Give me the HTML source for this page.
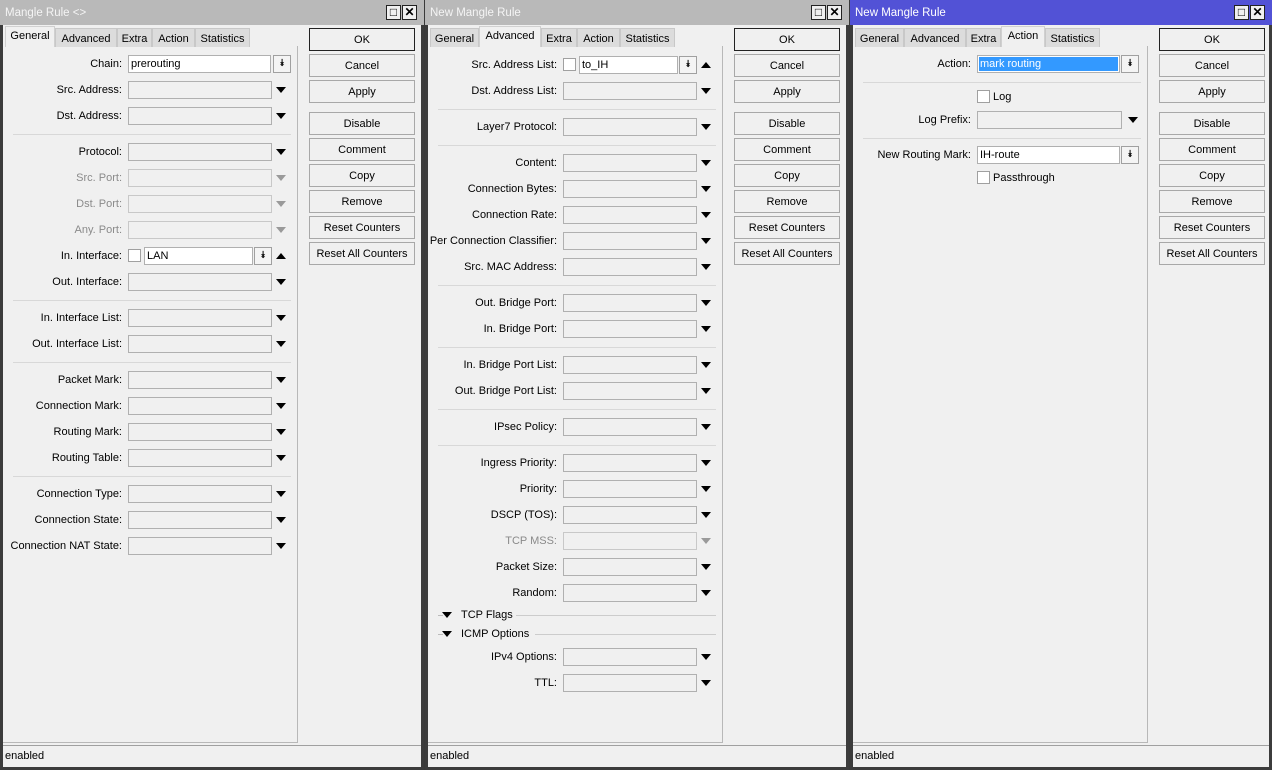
<!DOCTYPE html>
<html><head><meta charset="utf-8"><style>
*{box-sizing:border-box;margin:0;padding:0}
body{width:1272px;height:770px;background:#3a3a3a;font-family:"Liberation Sans",Arial,sans-serif;font-size:11px;color:#000;position:relative;overflow:hidden}
.w{position:absolute;top:0;height:770px;background:#f0f0f0;box-shadow:inset 3px 0 0 #3c3c3c,inset -3px 0 0 #3c3c3c,inset 0 -3px 0 #3c3c3c}
.t{position:absolute;left:0;right:0;top:0;height:25px;background:#b9b9b9;color:#f4f4f4;font-size:11.5px;padding:7px 0 0 5px}
.act .t{background:#5252d6;color:#fff}
.tb{position:absolute;top:5px;width:15px;height:15px;border:1px solid #222;background:#f0f0f0;font-size:12px;line-height:13px;text-align:center;font-weight:bold;color:#000}
.tabs{position:absolute;top:26px;left:2px;height:21px}
.tab{position:absolute;top:2px;height:19px;background:#dcdcdc;border:1px solid #c8c8c8;border-bottom:0;padding:4px 0 0 0;text-align:center;font-size:11px}
.tab.on{top:0;height:21px;background:#f0f0f0;border-color:#d0d0d0;padding-top:3px}
.pn{position:absolute;left:3px;top:46px;width:295px;height:697px;border:1px solid #b8b8b8;border-left:0;border-top:0}
.st{position:absolute;left:3px;right:3px;top:745px;height:22px;border-top:1px solid #a0a0a0;background:#f0f0f0;padding:4px 0 0 2px;font-size:11px}
.bt{position:absolute;left:309px;width:106px;height:23px;border:1px solid #a8a8a8;background:#f0f0f0;text-align:center;padding-top:5px;font-size:11px}
.bt.ok{border:1px solid #222}
.r{position:absolute;left:0;height:18px;width:300px}
.l{position:absolute;right:0;top:3px;text-align:right;white-space:nowrap;font-size:11px}
.f{position:absolute;top:0;height:18px;border:1px solid #b0b0b0;background:#f0f0f0;padding:2px 0 0 2px;font-size:11px}
.f.wh{background:#fff}
.a{position:absolute;top:6px;width:0;height:0;border-left:5px solid transparent;border-right:5px solid transparent;border-top:6px solid #000}
.a.up{border-top:0;border-bottom:6px solid #000}
.g .l{color:#8a8a8a}.g .a{border-top-color:#9a9a9a}.g .f{border-color:#c8c8c8}
.dd{position:absolute;top:0;width:18px;height:18px;border:1px solid #a0a0a0;background:#f4f4f4;font-size:10px;text-align:center;line-height:15px}
.cb{position:absolute;top:2px;width:13px;height:13px;border:1px solid #a0a0a0;background:#fff}
.sp{position:absolute;height:1px;background:#d8d8d8}
</style></head><body>

<!-- Window 1 -->
<div class="w" style="left:0;width:424px">
<div class="t">Mangle Rule &lt;&gt;</div>
<div class="tb" style="left:386px">□</div><div class="tb" style="left:402px">✕</div>
<div class="tabs" style="left:5px">
<div class="tab on" style="left:0;width:50px">General</div>
<div class="tab" style="left:50px;width:62px">Advanced</div>
<div class="tab" style="left:112px;width:35px">Extra</div>
<div class="tab" style="left:147px;width:43px">Action</div>
<div class="tab" style="left:190px;width:55px">Statistics</div>
</div>
<div class="pn"></div>
<div class="bt ok" style="top:28px">OK</div>
<div class="bt" style="top:54px">Cancel</div>
<div class="bt" style="top:80px">Apply</div>
<div class="bt" style="top:112px">Disable</div>
<div class="bt" style="top:138px">Comment</div>
<div class="bt" style="top:164px">Copy</div>
<div class="bt" style="top:190px">Remove</div>
<div class="bt" style="top:216px">Reset Counters</div>
<div class="bt" style="top:242px">Reset All Counters</div>

<div class="r" style="top:55px"><span class="l" style="right:178px">Chain:</span><span class="f wh" style="left:128px;width:143px">prerouting</span><span class="dd" style="left:273px">⯯</span></div>
<div class="r" style="top:81px"><span class="l" style="right:178px">Src. Address:</span><span class="f" style="left:128px;width:144px"></span><span class="a" style="left:276px"></span></div>
<div class="r" style="top:107px"><span class="l" style="right:178px">Dst. Address:</span><span class="f" style="left:128px;width:144px"></span><span class="a" style="left:276px"></span></div>
<div class="sp" style="left:13px;width:278px;top:134px"></div>
<div class="r" style="top:143px"><span class="l" style="right:178px">Protocol:</span><span class="f" style="left:128px;width:144px"></span><span class="a" style="left:276px"></span></div>
<div class="r g" style="top:169px"><span class="l" style="right:178px">Src. Port:</span><span class="f" style="left:128px;width:144px"></span><span class="a" style="left:276px"></span></div>
<div class="r g" style="top:195px"><span class="l" style="right:178px">Dst. Port:</span><span class="f" style="left:128px;width:144px"></span><span class="a" style="left:276px"></span></div>
<div class="r g" style="top:221px"><span class="l" style="right:178px">Any. Port:</span><span class="f" style="left:128px;width:144px"></span><span class="a" style="left:276px"></span></div>
<div class="r" style="top:247px"><span class="l" style="right:178px">In. Interface:</span><span class="cb" style="left:128px"></span><span class="f wh" style="left:144px;width:109px">LAN</span><span class="dd" style="left:254px">⯯</span><span class="a up" style="left:276px"></span></div>
<div class="r" style="top:273px"><span class="l" style="right:178px">Out. Interface:</span><span class="f" style="left:128px;width:144px"></span><span class="a" style="left:276px"></span></div>
<div class="sp" style="left:13px;width:278px;top:300px"></div>
<div class="r" style="top:309px"><span class="l" style="right:178px">In. Interface List:</span><span class="f" style="left:128px;width:144px"></span><span class="a" style="left:276px"></span></div>
<div class="r" style="top:335px"><span class="l" style="right:178px">Out. Interface List:</span><span class="f" style="left:128px;width:144px"></span><span class="a" style="left:276px"></span></div>
<div class="sp" style="left:13px;width:278px;top:362px"></div>
<div class="r" style="top:371px"><span class="l" style="right:178px">Packet Mark:</span><span class="f" style="left:128px;width:144px"></span><span class="a" style="left:276px"></span></div>
<div class="r" style="top:397px"><span class="l" style="right:178px">Connection Mark:</span><span class="f" style="left:128px;width:144px"></span><span class="a" style="left:276px"></span></div>
<div class="r" style="top:423px"><span class="l" style="right:178px">Routing Mark:</span><span class="f" style="left:128px;width:144px"></span><span class="a" style="left:276px"></span></div>
<div class="r" style="top:449px"><span class="l" style="right:178px">Routing Table:</span><span class="f" style="left:128px;width:144px"></span><span class="a" style="left:276px"></span></div>
<div class="sp" style="left:13px;width:278px;top:476px"></div>
<div class="r" style="top:485px"><span class="l" style="right:178px">Connection Type:</span><span class="f" style="left:128px;width:144px"></span><span class="a" style="left:276px"></span></div>
<div class="r" style="top:511px"><span class="l" style="right:178px">Connection State:</span><span class="f" style="left:128px;width:144px"></span><span class="a" style="left:276px"></span></div>
<div class="r" style="top:537px"><span class="l" style="right:178px">Connection NAT State:</span><span class="f" style="left:128px;width:144px"></span><span class="a" style="left:276px"></span></div>
<div class="st">enabled</div>
</div>

<!-- Window 2 -->
<div class="w" style="left:425px;width:424px">
<div class="t">New Mangle Rule</div>
<div class="tb" style="left:386px">□</div><div class="tb" style="left:402px">✕</div>
<div class="tabs" style="left:5px">
<div class="tab" style="left:0;width:49px">General</div>
<div class="tab on" style="left:49px;width:62px">Advanced</div>
<div class="tab" style="left:111px;width:36px">Extra</div>
<div class="tab" style="left:147px;width:43px">Action</div>
<div class="tab" style="left:190px;width:55px">Statistics</div>
</div>
<div class="pn"></div>
<div class="bt ok" style="top:28px">OK</div>
<div class="bt" style="top:54px">Cancel</div>
<div class="bt" style="top:80px">Apply</div>
<div class="bt" style="top:112px">Disable</div>
<div class="bt" style="top:138px">Comment</div>
<div class="bt" style="top:164px">Copy</div>
<div class="bt" style="top:190px">Remove</div>
<div class="bt" style="top:216px">Reset Counters</div>
<div class="bt" style="top:242px">Reset All Counters</div>

<div class="r" style="top:56px"><span class="l" style="right:168px">Src. Address List:</span><span class="cb" style="left:138px"></span><span class="f wh" style="left:154px;width:99px">to_IH</span><span class="dd" style="left:254px">⯯</span><span class="a up" style="left:276px"></span></div>
<div class="r" style="top:82px"><span class="l" style="right:168px">Dst. Address List:</span><span class="f" style="left:138px;width:134px"></span><span class="a" style="left:276px"></span></div>
<div class="sp" style="left:13px;width:278px;top:109px"></div>
<div class="r" style="top:118px"><span class="l" style="right:168px">Layer7 Protocol:</span><span class="f" style="left:138px;width:134px"></span><span class="a" style="left:276px"></span></div>
<div class="sp" style="left:13px;width:278px;top:145px"></div>
<div class="r" style="top:154px"><span class="l" style="right:168px">Content:</span><span class="f" style="left:138px;width:134px"></span><span class="a" style="left:276px"></span></div>
<div class="r" style="top:180px"><span class="l" style="right:168px">Connection Bytes:</span><span class="f" style="left:138px;width:134px"></span><span class="a" style="left:276px"></span></div>
<div class="r" style="top:206px"><span class="l" style="right:168px">Connection Rate:</span><span class="f" style="left:138px;width:134px"></span><span class="a" style="left:276px"></span></div>
<div class="r" style="top:232px"><span class="l" style="right:168px">Per Connection Classifier:</span><span class="f" style="left:138px;width:134px"></span><span class="a" style="left:276px"></span></div>
<div class="r" style="top:258px"><span class="l" style="right:168px">Src. MAC Address:</span><span class="f" style="left:138px;width:134px"></span><span class="a" style="left:276px"></span></div>
<div class="sp" style="left:13px;width:278px;top:285px"></div>
<div class="r" style="top:294px"><span class="l" style="right:168px">Out. Bridge Port:</span><span class="f" style="left:138px;width:134px"></span><span class="a" style="left:276px"></span></div>
<div class="r" style="top:320px"><span class="l" style="right:168px">In. Bridge Port:</span><span class="f" style="left:138px;width:134px"></span><span class="a" style="left:276px"></span></div>
<div class="sp" style="left:13px;width:278px;top:347px"></div>
<div class="r" style="top:356px"><span class="l" style="right:168px">In. Bridge Port List:</span><span class="f" style="left:138px;width:134px"></span><span class="a" style="left:276px"></span></div>
<div class="r" style="top:382px"><span class="l" style="right:168px">Out. Bridge Port List:</span><span class="f" style="left:138px;width:134px"></span><span class="a" style="left:276px"></span></div>
<div class="sp" style="left:13px;width:278px;top:409px"></div>
<div class="r" style="top:418px"><span class="l" style="right:168px">IPsec Policy:</span><span class="f" style="left:138px;width:134px"></span><span class="a" style="left:276px"></span></div>
<div class="sp" style="left:13px;width:278px;top:445px"></div>
<div class="r" style="top:454px"><span class="l" style="right:168px">Ingress Priority:</span><span class="f" style="left:138px;width:134px"></span><span class="a" style="left:276px"></span></div>
<div class="r" style="top:480px"><span class="l" style="right:168px">Priority:</span><span class="f" style="left:138px;width:134px"></span><span class="a" style="left:276px"></span></div>
<div class="r" style="top:506px"><span class="l" style="right:168px">DSCP (TOS):</span><span class="f" style="left:138px;width:134px"></span><span class="a" style="left:276px"></span></div>
<div class="r g" style="top:532px"><span class="l" style="right:168px">TCP MSS:</span><span class="f" style="left:138px;width:134px"></span><span class="a" style="left:276px"></span></div>
<div class="r" style="top:558px"><span class="l" style="right:168px">Packet Size:</span><span class="f" style="left:138px;width:134px"></span><span class="a" style="left:276px"></span></div>
<div class="r" style="top:584px"><span class="l" style="right:168px">Random:</span><span class="f" style="left:138px;width:134px"></span><span class="a" style="left:276px"></span></div>
<div class="sp" style="left:13px;width:5px;top:615px;background:#bbb"></div><span class="a" style="left:17px;top:612px"></span>
<div style="position:absolute;left:36px;top:609px;font-size:11px">TCP Flags</div><div class="sp" style="left:91px;width:200px;top:615px;background:#ccc"></div>
<div class="sp" style="left:13px;width:5px;top:634px;background:#bbb"></div><span class="a" style="left:17px;top:631px"></span>
<div style="position:absolute;left:36px;top:628px;font-size:11px">ICMP Options</div><div class="sp" style="left:110px;width:181px;top:634px;background:#ccc"></div>
<div class="r" style="top:648px"><span class="l" style="right:168px">IPv4 Options:</span><span class="f" style="left:138px;width:134px"></span><span class="a" style="left:276px"></span></div>
<div class="r" style="top:674px"><span class="l" style="right:168px">TTL:</span><span class="f" style="left:138px;width:134px"></span><span class="a" style="left:276px"></span></div>
<div class="st">enabled</div>
</div>

<!-- Window 3 -->
<div class="w act" style="left:850px;width:422px">
<div class="t">New Mangle Rule</div>
<div class="tb" style="left:384px">□</div><div class="tb" style="left:400px">✕</div>
<div class="tabs" style="left:5px">
<div class="tab" style="left:0;width:49px">General</div>
<div class="tab" style="left:49px;width:62px">Advanced</div>
<div class="tab" style="left:111px;width:35px">Extra</div>
<div class="tab on" style="left:146px;width:44px">Action</div>
<div class="tab" style="left:190px;width:55px">Statistics</div>
</div>
<div class="pn"></div>
<div class="bt ok" style="top:28px">OK</div>
<div class="bt" style="top:54px">Cancel</div>
<div class="bt" style="top:80px">Apply</div>
<div class="bt" style="top:112px">Disable</div>
<div class="bt" style="top:138px">Comment</div>
<div class="bt" style="top:164px">Copy</div>
<div class="bt" style="top:190px">Remove</div>
<div class="bt" style="top:216px">Reset Counters</div>
<div class="bt" style="top:242px">Reset All Counters</div>

<div class="r" style="top:55px"><span class="l" style="right:179px">Action:</span><span class="f wh" style="left:127px;width:143px;padding:1px"><span style="display:block;background:#3399ff;color:#fff;height:14px;padding:1px 0 0 1px">mark routing</span></span><span class="dd" style="left:271px">⯯</span></div>
<div class="sp" style="left:13px;width:278px;top:82px"></div>
<div class="r" style="top:88px"><span class="cb" style="left:127px"></span><span class="l" style="left:143px;right:auto">Log</span></div>
<div class="r" style="top:111px"><span class="l" style="right:179px">Log Prefix:</span><span class="f" style="left:127px;width:145px"></span><span class="a" style="left:278px"></span></div>
<div class="sp" style="left:13px;width:278px;top:138px"></div>
<div class="r" style="top:146px"><span class="l" style="right:179px">New Routing Mark:</span><span class="f wh" style="left:127px;width:143px">IH-route</span><span class="dd" style="left:271px">⯯</span></div>
<div class="r" style="top:169px"><span class="cb" style="left:127px"></span><span class="l" style="left:143px;right:auto">Passthrough</span></div>
<div class="st">enabled</div>
</div>
</body></html>
